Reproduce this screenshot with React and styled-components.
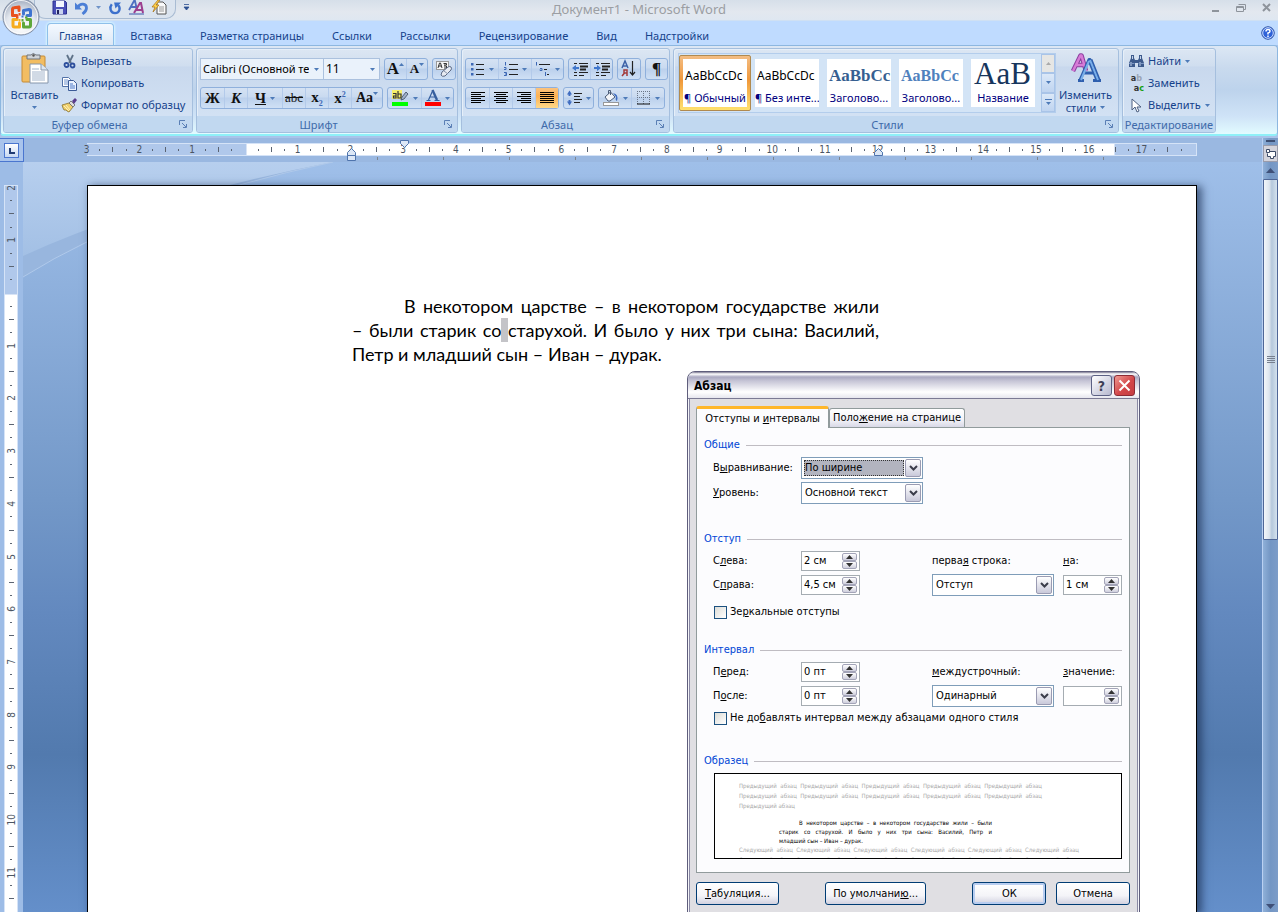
import React from 'react'
import styled, { createGlobalStyle, css } from 'styled-components'

const UI = '"Noto Sans", "Open Sans", sans-serif'
const DIALOG = '"DejaVu Sans Condensed", "DejaVu Sans", sans-serif'
const SERIF = '"Liberation Serif", serif'

const GlobalStyle = createGlobalStyle`
  * { box-sizing: border-box; }
  body { margin: 0; }
  button, input, select { font: inherit; color: inherit; margin: 0; padding: 0; }
  button { background: none; border: 0; cursor: pointer; }
`

const Screen = styled.div`
  position: relative;
  display: flex;
  flex-direction: column;
  height: 100vh;
  overflow: hidden;
  background: #a9c4ea;
  color: #15428b;
  font: 11px/16px ${UI};`

const Svg = styled.svg`
  display: block;
  flex: none;
  overflow: visible;`

/* ---------- title bar and tabs ---------- */

const TitleBar = styled.header`
  display: grid;
  grid-template-columns: 1fr auto 1fr;
  height: 21px;
  background: linear-gradient(#d6dfe9, #e3e8ef 60%, #dfe7f1);
  border-bottom: 1px solid #cfe0f3;`

const QuickArea = styled.div`
  display: flex;
  align-items: flex-start;
  gap: 7px;
  padding-left: 34px;`

const QuickBar = styled.div`
  display: flex;
  align-items: center;
  gap: 8px;
  height: 19px;
  padding: 0 8px 3px 17px;
  border: 1px solid #a9bcd3;
  border-top: 0;
  border-radius: 0 0 10px 12px;
  background: #dbe4ef;`

const WindowTitle = styled.h1`
  margin: 0;
  color: #9b9ea3;
  font: 13px/19px ${UI};`

const WindowButtons = styled.div`
  display: flex;
  justify-content: flex-end;
  align-items: flex-start;
  gap: 16px;
  padding: 3px 7px 0 0;`

const OfficeButton = styled.button`
  position: absolute;
  z-index: 2;
  top: -2px;
  left: 2px;`

const TabBar = styled.nav`
  display: flex;
  align-items: flex-end;
  gap: 4px;
  height: 24px;
  padding: 0 3px 0 47px;
  background: #bfdbff;`

const Tab = styled.button`
  height: 22px;
  padding: 2px 11px 0;
  white-space: nowrap;
  border: 1px solid transparent;
  border-bottom: 0;
  ${p => p.$active && css`
    border-color: #8fc0ea;
    border-radius: 4px 4px 0 0;
    background: linear-gradient(#f4f9ff, #dde8f5);
    box-shadow: 0 0 2px 1px #d8f6ff;
  `}`

const HelpButton = styled.button`
  margin: 0 0 5px auto;`

/* ---------- ribbon ---------- */

const Ribbon = styled.section`
  display: flex;
  gap: 3px;
  height: 91px;
  padding: 2px 2px 1px;
  border: 1px solid #8db7e0;
  border-bottom: 2px solid #8ff0f8;
  border-radius: 4px;
  background: linear-gradient(#dce7f4, #c9daee 25%, #bdd3ec 50%, #cfe3f7 80%, #e2fbff);`

const GroupBox = styled.section`
  display: flex;
  flex-direction: column;
  width: ${p => p.$width}px;
  border: 1px solid #a5bfde;
  border-radius: 3px;
  background: linear-gradient(#dce6f3, #d0deef 20%, #c8d8ed 22%, #d3e2f4 85%);
  box-shadow: inset 1px 1px 0 #e6eff9;
  overflow: hidden;`

const GroupBody = styled.div`
  display: flex;
  flex: 1;
  padding: ${p => p.$pad || '0 3px'};`

const GroupTitle = styled.footer`
  position: relative;
  height: 16px;
  padding-right: ${p => p.$launcher ? 17 : 0}px;
  background: #c1d8f0;
  color: #3e6aaa;
  text-align: center;
  line-height: 17px;`

const Launcher = styled.button`
  position: absolute;
  right: 5px;
  top: 4px;`

const BigButton = styled.button`
  display: flex;
  flex-direction: column;
  align-items: center;
  width: ${p => p.$width}px;
  padding-top: 4px;
  line-height: 13px;
  white-space: nowrap;`

const BigLabel = styled.span`
  display: flex;
  align-items: center;
  gap: 4px;
  padding-top: ${p => p.$top || 0}px;`

const SmallList = styled.div`
  display: flex;
  flex-direction: column;
  padding-top: 1px;`

const SmallButton = styled.button`
  display: flex;
  align-items: center;
  gap: 4px;
  height: 22px;
  white-space: nowrap;`

const ToolRows = styled.div`
  display: flex;
  flex-direction: column;
  gap: 7px;
  padding-top: 9px;`

const ToolRow = styled.div`
  display: flex;
  gap: 4px;
  height: 22px;`

const Cluster = styled.div`
  display: flex;
  border: 1px solid #8fb0dc;
  border-radius: 3px;
  background: linear-gradient(#d5e2f3, #c9daf0 45%, #bbd0ec 50%, #cfe0f5);`

const Tool = styled.button`
  display: flex;
  align-items: center;
  justify-content: center;
  gap: ${p => p.$tight ? 0 : 4}px;
  width: ${p => p.$width || 23}px;
  color: #111;
  border-left: 1px solid #b3caea;
  &:first-child { border-left: 0; }
  svg:nth-child(2) { align-self: ${p => p.$tight ? 'flex-start' : 'center'}; margin-top: ${p => p.$tight ? 4 : 0}px; }
  ${p => p.$on && css`
    background: linear-gradient(#fbc37f, #fdb152 40%, #ffd98a);
  `}`

const Letter = styled.span`
  font: ${p => p.$light ? 'normal' : 'bold'} ${p => p.$size || 15}px/18px ${SERIF};
  font-style: ${p => p.$italic ? 'italic' : 'normal'};
  text-decoration: ${p => p.$line || 'none'};
  sub, sup { color: #3d68b5; font-size: 8px; line-height: 8px; }`

const Combo = styled.div`
  display: flex;
  align-items: center;
  width: ${p => p.$width}px;
  height: 22px;
  padding-right: 4px;
  border: 1px solid #abc1de;
  background: #eaf2fb;
  color: #000;
  & + & { margin-left: -5px; }`

const ComboSelect = styled.select`
  flex: 1;
  min-width: 0;
  margin-right: 5px;
  padding-left: 2px;
  appearance: none;
  border: 0;
  background: none;
  outline: 0;
  font-size: ${p => p.$small ? 11 : 12}px;
  text-overflow: clip;`

const Gallery = styled.div`
  display: flex;
  height: 60px;
  margin-top: 4px;
  border: 1px solid #b3cdec;
  background: #d3e4f6;`

const StyleCard = styled.button`
  width: 72px;
  height: 56px;
  margin-top: 1px;
  padding: 3px;
  border: 1px solid transparent;
  border-radius: 2px;
  ${p => p.$active && css`
    border-color: #b08a50;
    background: linear-gradient(#f3bd84, #f0983b 45%, #ffe16e);
  `}`

const StyleTile = styled.span`
  display: flex;
  flex-direction: column;
  height: 48px;
  background: #fff;
  overflow: hidden;
  white-space: nowrap;`

const StyleSample = styled.span`
  height: 32px;
  padding-left: ${p => p.$size > 20 ? 3 : 2}px;
  line-height: ${p => p.$size > 20 ? 30 : 34}px;
  text-align: left;
  color: ${p => p.$color};
  font-family: ${p => p.$serif ? SERIF : UI};
  font-size: ${p => p.$size}px;
  font-weight: ${p => p.$bold ? 'bold' : 'normal'};`

const StyleName = styled.span`
  color: #000080;
  line-height: 14px;
  text-align: center;`

const GalleryScroll = styled.div`
  display: flex;
  flex-direction: column;
  width: 14px;
  margin-left: 2px;`

const GalleryArrow = styled.button`
  display: flex;
  flex: 1;
  flex-direction: column;
  gap: 2px;
  align-items: center;
  justify-content: center;
  border: 1px solid #a9c4e8;
  background: ${p => p.$off ? '#e6e6e4' : 'linear-gradient(#dbe8f8, #bfd4f0)'};`

const Dash = styled.i`
  width: 7px;
  height: 1px;
  background: #4d7ab8;`

/* ---------- workspace ---------- */

const Workspace = styled.main`
  display: flex;
  flex: 1;
  min-height: 0;
  margin-top: 2px;`

const DocColumn = styled.div`
  display: flex;
  flex-direction: column;
  flex: 1;
  min-width: 0;`

const RulerBand = styled.div`
  display: flex;
  height: 24px;
  background: #9ab8e1;`

const TabStop = styled.button`
  display: flex;
  align-items: center;
  justify-content: center;
  width: 24px;
  border: 1px solid #4a76cf;
  border-left: 0;
  background: #a9c4ec;`

const TabStopFace = styled.span`
  display: block;
  width: 15px;
  height: 15px;
  padding: 4px;
  border: 1px solid #4a76cf;
  background: linear-gradient(#fff, #c6d8f2);`

const Ruler = styled.div`
  position: relative;
  flex: 1;
  margin: 5px 65px 0 63px;`

const RulerScale = styled.div`
  height: 13px;
  border: 1px solid #d5e3f7;
  border-width: 1px 1px 1px 0;
  background: linear-gradient(to right, #b0c8eb 159px, #fff 160px, #fff calc(100% - 82px), #b0c8eb calc(100% - 81px));`

const RulerMarks = styled.div`
  display: flex;
  height: 100%;
  margin: 0 8px 0 -7px;`

const RulerMark = styled.span`
  display: flex;
  flex: 1 1 0;
  align-items: center;
  justify-content: center;
  min-width: 0;
  min-height: 0;
  color: #4b5563;
  font: 10px/11px ${DIALOG};`

const Tick = styled.i`
  width: ${p => p.$vertical ? p.$size : 1}px;
  height: ${p => p.$vertical ? 1 : p.$size}px;
  background: #5b6472;`

const TabTicks = styled.div`
  height: 3px;
  margin: 1px 80px 0 290px;
  background: repeating-linear-gradient(to right, #7d8590 0 1px, transparent 1px 66px);`

const Marker = styled.span`
  position: absolute;
  left: ${p => p.$left}px;
  top: ${p => p.$top}px;`

const DocRow = styled.div`
  display: flex;
  flex: 1;
  min-height: 0;`

const SideRuler = styled.div`
  flex: none;
  width: 23px;
  padding: 23px 5px 0 4px;
  background: #9dbce6;`

const SideScale = styled.div`
  height: 100%;
  border: 1px solid #d5e3f7;
  border-bottom: 0;
  background: linear-gradient(#b0c8eb 108px, #fff 109px);`

const SideMarks = styled.div`
  display: flex;
  flex-direction: column;
  height: calc(100% + 12px);
  margin-top: -5px;`

const SideNumber = styled.span`
  writing-mode: vertical-rl;
  transform: rotate(180deg);`

const Desk = styled.div`
  position: relative;
  display: flex;
  flex: 1;
  min-width: 0;
  padding: 23px 65px 0 64px;
  background: linear-gradient(#9fbfe9, #7398c8 45%, #6389bf 60%, #527aae 79%, #648fca);`

const Swoosh = styled.svg`
  position: absolute;
  left: 0;
  top: 0;`

const Sheet = styled.article`
  position: relative;
  flex: 1;
  padding: 108px 317px 0 264px;
  border: 1px solid #000;
  border-bottom: 0;
  background: #fff;
  box-shadow: 4px 2px 8px 1px rgba(25, 45, 80, 0.65);
  color: #000;
  font: 18px/24px Lato, "Noto Sans", sans-serif;`

const Paragraph = styled.p`
  margin: 0;`

const Line = styled.span`
  display: block;
  padding-left: ${p => p.$indent || 0}px;
  white-space: nowrap;
  text-align-last: ${p => p.$last ? 'left' : 'justify'};`

const Marked = styled.span`
  padding: 1px 0;
  background: #c4c4c8;`

const Scrollbar = styled.aside`
  display: flex;
  flex-direction: column;
  align-items: center;
  width: 16px;
  padding-top: 2px;
  border-left: 1px solid #b9d0f2;
  background: linear-gradient(to right, #8fb0d8, #7396c4 50%, #7c9cc8);`

const SplitHandle = styled.div`
  width: 9px;
  height: 2px;
  background: #3d4f73;`

const RulerToggle = styled.button`
  display: flex;
  align-items: center;
  justify-content: center;
  width: 15px;
  height: 17px;
  margin-top: 3px;
  border: 1px solid #9a9cab;
  background: #d4d4dc;`

const ScrollArrow = styled.button`
  display: flex;
  align-items: center;
  justify-content: center;
  width: 100%;
  height: ${p => p.$height}px;`

const ScrollTrack = styled.div`
  flex: 1;
  width: 100%;`

const Thumb = styled.div`
  display: flex;
  flex-direction: column;
  align-items: center;
  justify-content: center;
  gap: 1px;
  height: 50%;
  border: 1px solid #4f6797;
  border-radius: 1px;
  background: linear-gradient(to right, #f2f6fa, #dde5ee 40%, #b5c8dc 60%, #d4e2ee);`

const Grip = styled.i`
  width: 8px;
  height: 1px;
  background: #77808f;`

/* ---------- dialog ---------- */

const Dialog = styled.div`
  position: absolute;
  z-index: 3;
  left: 687px;
  top: 371px;
  width: 453px;
  border: 1px solid #5f5e7c;
  border-radius: 8px 8px 0 0;
  background: #e0dfe3;
  box-shadow: inset 0 0 0 1px #f5f5fa, inset 0 0 0 2px #8a89a4;
  color: #000;
  font: 11px/14px ${DIALOG};`

const DialogTitle = styled.header`
  display: flex;
  align-items: center;
  gap: 2px;
  height: 27px;
  padding: 1px 4px 0 6px;
  border-bottom: 1px solid #7b7a94;
  border-radius: 7px 7px 0 0;
  background: linear-gradient(#77758f, #fff 2px, #a9a8c1 5px, #c6c5d6 9px, #fff 20px, #e6e6ee);`

const DialogHeading = styled.h2`
  flex: 1;
  margin: 0;
  font: bold 12px/16px ${DIALOG};`

const CaptionButton = styled.button`
  display: flex;
  align-items: center;
  justify-content: center;
  width: 21px;
  height: 21px;
  border: 1px solid ${p => p.$close ? '#8c2b35' : '#5c6184'};
  border-radius: 3px;
  color: #3d3f55;
  font-weight: bold;
  font-size: 14px;
  background: ${p => p.$close
    ? 'linear-gradient(135deg, #ef9a92, #d3474a 55%, #c43d42)'
    : 'linear-gradient(135deg, #fff, #b6b8cf)'};`

const DialogBody = styled.div`
  padding: 7px 9px 20px 8px;`

const DialogTabs = styled.div`
  display: flex;
  align-items: flex-end;`

const DialogTab = styled.button`
  height: ${p => p.$active ? 22 : 19}px;
  width: ${p => p.$active ? 133 : 136}px;
  border: 1px solid #919b9c;
  border-bottom: 0;
  border-radius: 3px 3px 0 0;
  white-space: nowrap;
  background: linear-gradient(#fff, #f3f3f8 60%, #d8d8e6);
  ${p => p.$active && css`
    position: relative;
    margin-bottom: -1px;
    border-top: 3px solid #ffb72b;
    background: #fcfcfe;
  `}`

const Panel = styled.div`
  height: 446px;
  padding: 10px 7px 0;
  border: 1px solid #919b9c;
  background: #fcfcfe;`

const Section = styled.fieldset`
  height: ${p => p.$height}px;
  margin: 0;
  padding: 0;
  border: 0;
  min-width: 0;`

const Legend = styled.legend`
  display: flex;
  align-items: center;
  gap: 6px;
  width: 100%;
  padding: 0;
  color: #0046d5;
  &::after { content: ''; flex: 1; height: 1px; background: #bfbcc2; }`

const Fields = styled.div`
  display: grid;
  grid-template-columns: 88px 131px 131px 1fr;
  grid-auto-rows: ${p => p.$row || 24}px;
  align-items: center;
  margin-top: 3px;
  padding-left: 9px;
  label { white-space: nowrap; }`

const SelectBox = styled.div`
  display: flex;
  width: 122px;
  height: 22px;
  padding: 1px;
  border: 1px solid #7f9db9;
  background: #fff;`

const Select = styled.select`
  flex: 1;
  min-width: 0;
  margin: 1px;
  padding-left: 1px;
  appearance: none;
  border: 0;
  border-radius: 0;
  background: ${p => p.$focused ? '#b2b4bf' : '#fff'};
  outline: ${p => p.$focused ? '1px dotted #333' : '0'};
  outline-offset: -1px;`

const SelectArrow = styled.span`
  display: flex;
  align-items: center;
  justify-content: center;
  width: 16px;
  border: 1px solid #9a9bb2;
  border-radius: 2px;
  background: linear-gradient(#fff, #c9c9da);
  pointer-events: none;`

const SpinBox = styled.div`
  display: flex;
  width: 59px;
  height: 20px;
  padding: 1px;
  border: 1px solid #a5acb2;
  background: #fff;`

const SpinInput = styled.input`
  flex: 1;
  min-width: 0;
  padding-left: 1px;
  border: 0;
  outline: 0;
  background: none;`

const SpinButtons = styled.div`
  display: flex;
  flex-direction: column;
  width: 15px;
  margin-right: 1px;`

const SpinButton = styled.button`
  display: flex;
  flex: 1;
  align-items: center;
  justify-content: center;
  border: 1px solid #a3a4b8;
  border-radius: 2px;
  background: linear-gradient(#fff, #cfcfdd);`

const CheckRow = styled.div`
  display: flex;
  align-items: center;
  gap: 3px;
  height: 16px;
  margin-top: ${p => p.$top}px;
  padding-left: 10px;`

const CheckBox = styled.input`
  appearance: none;
  width: 13px;
  height: 13px;
  border: 1px solid #1c5180;
  background: linear-gradient(135deg, #dcdcd7, #fff);`

const Preview = styled.div`
  height: 86px;
  margin: 5px 0 0 10px;
  padding: 7px 24px 0;
  border: 1px solid #000;
  background: #fff;
  overflow: hidden;
  color: #a8a8a8;
  font: 6px/10px ${DIALOG};
  white-space: nowrap;`

const PreviewText = styled.p`
  width: ${p => p.$width}px;
  margin: 0;`

const PreviewSample = styled.p`
  width: 213px;
  margin: 7px 0 0 40px;
  color: #000;
  line-height: 9px;`

const DialogFooter = styled.footer`
  display: flex;
  gap: 10px;
  margin-top: 9px;`

const PushButton = styled.button`
  width: ${p => p.$width}px;
  height: 23px;
  margin-left: ${p => p.$before || 0}px;
  border: 1px solid #003c74;
  border-radius: 3px;
  background: linear-gradient(#fff, #f4f4f8 60%, #d2d2e0);
  ${p => p.$primary && css`box-shadow: inset 0 0 0 2px #b8cdf0;`}`

/* ---------- icons ---------- */

const Arrow = ({ color = '#4d7ab8', up, size = 5 }) => (
  <Svg width={size} height={(size + 1) / 2} viewBox="0 0 5 3" preserveAspectRatio="none">
    <path d={up ? 'M0 3h5L2.5 0z' : 'M0 0h5L2.5 3z'} fill={color} />
  </Svg>
)

const OfficeLogo = () => (
  <Svg width="38" height="38" viewBox="0 0 38 38">
    <defs>
      <radialGradient id="orb" cx="50%" cy="75%" r="70%">
        <stop offset="0" stopColor="#fff" />
        <stop offset="0.6" stopColor="#e3e7ee" />
        <stop offset="1" stopColor="#a9b3c4" />
      </radialGradient>
    </defs>
    <circle cx="19" cy="19" r="18" fill="url(#orb)" stroke="#7f8ca3" />
    <circle cx="19" cy="19" r="16.500" fill="none" stroke="#fff" strokeOpacity="0.8" />
    <g fill="none" strokeWidth="3" strokeLinejoin="round" strokeLinecap="round">
      <path d="M15 17.500H10.500V11.500Q10.500 10 12 9.800L17 9V12.500" stroke="#e8501e" />
      <path d="M21.500 16V12.500L27 11.500Q28.500 11.500 28.500 13V17.500H25" stroke="#3f74d0" />
      <path d="M15 21.500H11V27.500Q11 29 12.500 29H17.500V25" stroke="#f6ac1d" />
      <path d="M21.500 25V29H27Q28.500 29 28.500 27.500V21.500H25" stroke="#5fa83a" />
    </g>
    <path d="M17.500 15v2.500M14 19.500h2.500" stroke="#e8501e" strokeWidth="2" />
    <path d="M20.500 17.500v2" stroke="#3f74d0" strokeWidth="2" />
    <path d="M17.500 21v2.500" stroke="#f6ac1d" strokeWidth="2" />
    <path d="M20.500 21v2.500M23 19.500h2.500" stroke="#5fa83a" strokeWidth="2" />
  </Svg>
)

const SaveIcon = () => (
  <Svg width="15" height="15" viewBox="0 0 15 15">
    <path d="M1 1h12l1.500 1.500V14H1z" fill="#4a4fb8" stroke="#2c3190" />
    <rect x="4" y="1" width="8" height="6" fill="#f3f6ff" />
    <rect x="4" y="9" width="7" height="5" fill="#c9d3ee" />
    <rect x="5" y="10" width="2" height="4" fill="#20245e" />
  </Svg>
)

const UndoIcon = () => (
  <Svg width="13" height="14" viewBox="0 0 13 14">
    <path d="M3 6C5 2 11.500 2 11.500 7 11.500 10 9.500 11.500 7.500 13" fill="none" stroke="#4c7fd6" strokeWidth="2.800" />
    <path d="M0 1.500V8.500H7z" fill="#4c7fd6" />
  </Svg>
)

const RedoIcon = () => (
  <Svg width="12" height="14" viewBox="0 0 13 14">
    <path d="M3 3C.5 6 1 12.500 6.500 12.500S12.500 6.500 10 4" fill="none" stroke="#3c70cc" strokeWidth="2.600" />
    <path d="M5.500 1H13L7 7.500z" fill="#3c70cc" />
  </Svg>
)

const FontsIcon = () => (
  <Svg width="30" height="30" viewBox="0 0 30 30">
    <g fill="none" strokeLinejoin="round">
      <path d="M2 18 9.500 2.500h1L15 18M5 12h8" stroke="#8d3fa0" strokeWidth="4.500" />
      <path d="M2 18 9.500 2.500h1L15 18M5 12h8" stroke="#d67bd6" strokeWidth="2.500" />
      <path d="M9 27 18 6.500h1L27 27M13 20h11M7 27.500h6M22 27.500h8" stroke="#2f5fae" strokeWidth="3" />
      <path d="M19 7l8 20" stroke="#2f5fae" strokeWidth="5" />
      <path d="M19 7l8 20M10 27 18 8" stroke="#79aee9" strokeWidth="2" />
    </g>
  </Svg>
)

const StylesMini = () => (
  <Svg width="15" height="15" viewBox="0 0 15 15">
    <path d="M0 10 5 1h1l2 9M2 7h5" fill="none" stroke="#4d6fc0" strokeWidth="1.800" />
    <path d="M5 13 11 3h1l2 10M7 10h6" fill="none" stroke="#9d3f8f" strokeWidth="2" />
    <path d="M0 14h15" stroke="#3c55a8" />
  </Svg>
)

const FlashDocIcon = () => (
  <Svg width="15" height="15" viewBox="0 0 15 15">
    <path d="M5 2h6l3 3v9H5z" fill="#fafafa" stroke="#555" />
    <path d="M7 7h5M7 9h5M7 11h5" stroke="#999" />
    <path d="M6 0 0 7h3l-2 5 6-7H4l4-5z" fill="#ffd24d" stroke="#a66d10" strokeWidth="0.700" />
  </Svg>
)

const PasteIcon = () => (
  <Svg width="28" height="31" viewBox="0 0 28 31">
    <rect x="1" y="3" width="23" height="26" rx="1" fill="#f2bd62" stroke="#c58a35" />
    <path d="M6 2h4q2-3 5 0h4v4H6z" fill="#cfd3d8" stroke="#6f757d" />
    <circle cx="12.500" cy="2.500" r="1.200" fill="#555" />
    <path d="M9 11h11l7 6v13H9z" fill="#fff" stroke="#8696ab" />
    <path d="M20 11v6h7" fill="#dbe6f2" stroke="#8696ab" />
    <path d="M11 16h7M11 19h13M11 21h13M11 23h13M11 25h13M11 27h13" stroke="#a4b5cc" />
  </Svg>
)

const CutIcon = () => (
  <Svg width="15" height="15" viewBox="0 0 15 15">
    <path d="M5 1 9 9M11 1 7 9" stroke="#5f7288" strokeWidth="1.800" />
    <circle cx="4.500" cy="11" r="2" fill="none" stroke="#2d4e9c" strokeWidth="1.800" />
    <circle cx="10.500" cy="11.500" r="2" fill="none" stroke="#2d4e9c" strokeWidth="1.800" />
  </Svg>
)

const CopyIcon = () => (
  <Svg width="15" height="15" viewBox="0 0 15 15">
    <path d="M.5 1.500h6l2 2v7h-8z" fill="#fff" stroke="#5272a8" />
    <path d="M2 4h4M2 6h5M2 8h4" stroke="#6f93cf" />
    <path d="M6.500 4.500h5l3 3v7h-8z" fill="#eaf2ff" stroke="#3b5b97" />
    <path d="M8 8h3M8 10h5M8 12h5" stroke="#4d7bc9" />
  </Svg>
)

const BrushIcon = () => (
  <Svg width="15" height="15" viewBox="0 0 15 15">
    <path d="M0 7l7-2 4 4-4 5-2-1-1-1-2 0-1-2z" fill="#f0cf6a" stroke="#8a7430" strokeWidth="0.800" />
    <path d="M2 8l5 5M4 7l4 5" stroke="#fdf0b8" />
    <path d="M7 5l2-2 4 4-2 2z" fill="#ddd" stroke="#666" strokeWidth="0.800" />
    <path d="M10 3l3-3 2 2-3 4z" fill="#5a3c8c" />
  </Svg>
)

const BinocularsIcon = () => (
  <Svg width="15" height="14" viewBox="0 0 15 14">
    <path d="M2 1h3v3l1 2h3l1-2V1h3v3l2 5v4H9V9H6v4H0V9l2-5z" fill="#3d5a8c" />
    <path d="M2 8v4M11 8v4M3.500 2v3M11.500 2v3" stroke="#c5d4ea" />
    <path d="M0 9.500h5.500M9.500 9.500H15" stroke="#7d97c2" />
  </Svg>
)

const ReplaceMark = styled.span`
  display: grid;
  width: 15px;
  color: #333;
  font: bold 9px/10px ${DIALOG};
  span:last-child { justify-self: end; }
  b { color: #14a014; }
  i { font-style: normal; color: #9aa4b4; }`

const ReplaceIcon = () => (
  <ReplaceMark>
    <span>a<i>b</i></span>
    <span>a<b>c</b></span>
  </ReplaceMark>
)

const CursorIcon = () => (
  <Svg width="15" height="15" viewBox="0 0 15 15">
    <path d="M3 1v11l3-3 2 5 2-1-2-4h4z" fill="#fff" stroke="#4d5f80" />
  </Svg>
)

const EraserIcon = () => (
  <Svg width="18" height="18" viewBox="0 0 18 18">
    <rect x="1.500" y="1.500" width="12" height="8" fill="#f7f7f7" stroke="#999" />
    <path d="M3 8l1.500-5h1L7 8M3.500 6h3M8.500 3.500h3v1.500H9M9 6h2.500v2H9" fill="none" stroke="#333" />
    <path d="M7 12l6-5q2-1 3 0t0 3l-6 6q-3 1-4-1z" fill="#e8ebf2" stroke="#5c6a85" />
    <path d="M9 11l4 3" stroke="#8794ab" />
  </Svg>
)

const MarkerIcon = () => (
  <Svg width="17" height="17" viewBox="0 0 17 17">
    <rect width="10" height="9" fill="#f6f06a" />
    <path d="M1 3.500h3v4.500H1.500V6H4M6 1v7h3V4H6" fill="none" stroke="#333" strokeWidth="1.200" />
    <path d="M9 10l1-3 4-5 2 2-4 5z" fill="#9fb0c9" stroke="#3a4760" strokeWidth="0.800" />
    <rect y="12" width="16" height="4" fill="#0f0" />
  </Svg>
)

const FontColorIcon = () => (
  <Svg width="16" height="17" viewBox="0 0 16 17">
    <path d="M3.500 10 8 0M5 7h6M1.500 10.500h4M9.500 10.500h5" fill="none" stroke="#365f9e" strokeWidth="1.200" />
    <path d="M7.500 0 12 10" stroke="#365f9e" strokeWidth="2.400" />
    <rect y="12" width="16" height="4" fill="#f00" />
  </Svg>
)

const BulletsIcon = () => (
  <Svg width="14" height="14" viewBox="0 0 14 14">
    <path d="M0 1h2.500v2.500H0zM0 6h2.500v2.500H0zM0 11h2.500v2.500H0z" fill="#3d68b5" />
    <path d="M5 2.500h8M5 7.500h8M5 12.500h8" stroke="#222" />
  </Svg>
)

const NumbersIcon = () => (
  <Svg width="14" height="14" viewBox="0 0 14 14">
    <path d="M1.500 0v3.500M0 5.500h2v2H0M0 10.500h2.500v3H0M1 12h1" fill="none" stroke="#3d68b5" />
    <path d="M5 2.500h9M5 7.500h9M5 12.500h9" stroke="#222" />
  </Svg>
)

const MultiIcon = () => (
  <Svg width="16" height="14" viewBox="0 0 16 14">
    <path d="M1.500 0v3.500M5 6.500h2v2H5v-1M10.500 10v4M10 11.500h1" fill="none" stroke="#3d68b5" />
    <path d="M4 2.500h11M9 7.500h3M12 12.500h2" stroke="#222" />
  </Svg>
)

const IndentIcon = ({ right }) => (
  <Svg width="16" height="14" viewBox="0 0 16 14">
    <path d="M2 1.500h3M7 1.500h9M7 10.500h9M2 10.500h3M2 13.500h3M7 13.500h5" stroke="#222" />
    <path d="M8 4.500h8M8 7.500h6" stroke="#222" strokeWidth="2" />
    <path d={right ? 'M0 5h3V3l4 3-4 3V7H0z' : 'M7 5H4V3L0 6l4 3V7h3z'} fill="#3f76cc" />
  </Svg>
)

const SortIcon = () => (
  <Svg width="16" height="16" viewBox="0 0 16 16">
    <path d="M1 7 4 0l3 7M2 5h4" fill="none" stroke="#3d62a8" strokeWidth="1.500" />
    <path d="M6 15V9H3v3h3M3.500 12 1 15" fill="none" stroke="#a33a3a" strokeWidth="1.500" />
    <path d="M11.500 0v14M9 11l2.500 3 2.500-3" fill="none" stroke="#222" strokeWidth="1.200" />
  </Svg>
)

const AlignIcon = ({ kind }) => (
  <Svg width="14" height="12" viewBox="0 0 14 12">
    {[14, 10, 14, 10, 14, 10].map((w, i) => {
      const width = kind === 'full' ? 14 : w
      const x = kind === 'right' ? 14 - width : kind === 'center' ? (14 - width) / 2 : 0
      return <rect key={i} x={x} y={i * 2} width={width} height="1" fill="#000" />
    })}
  </Svg>
)

const SpacingIcon = () => (
  <Svg width="15" height="16" viewBox="0 0 15 16">
    <path d="M2.500 3v3M2.500 10v3" stroke="#3f6cc0" strokeWidth="2" />
    <path d="M0 4.500l2.500-4L5 4.500zM0 11.500l2.500 4 2.500-4z" fill="#3f6cc0" />
    <path d="M7 3.500h8M7 6.500h6M7 9.500h8M7 12.500h6" stroke="#222" />
  </Svg>
)

const BucketIcon = () => (
  <Svg width="16" height="16" viewBox="0 0 16 16">
    <path d="M2 7l5.500-5L12 7l-5 4H5z" fill="#f4f6fa" stroke="#4b5c78" />
    <path d="M7.500 5V.5H5.500V4" fill="none" stroke="#4b5c78" />
    <path d="M10 3q6 1 4 8-2-1-1-4z" fill="#3f6cc0" />
    <rect x="0.500" y="12.500" width="15" height="3" fill="#fff" stroke="#999" />
  </Svg>
)

const BorderIcon = () => (
  <Svg width="14" height="14" viewBox="0 0 14 14">
    <path d="M.5 0v13M6.500 0v13M12.500 0v13M0 .5h13M0 6.500h13" stroke="#6b7687" strokeDasharray="1 1" />
    <path d="M0 13h13" stroke="#111" />
  </Svg>
)

const LauncherIcon = () => (
  <Svg width="8" height="8" viewBox="0 0 8 8">
    <path d="M.5 5V.5H6" fill="none" stroke="#5a7fb5" />
    <path d="M3 3l4 4M7.500 4v3.500H4" fill="none" stroke="#5a7fb5" />
  </Svg>
)

const HelpIcon = () => (
  <Svg width="14" height="14" viewBox="0 0 14 14">
    <circle cx="7" cy="7" r="6.200" fill="#2f62d8" stroke="#23489d" />
    <circle cx="7" cy="7" r="5.300" fill="none" stroke="#cfe0ff" />
    <path d="M5 5.500q0-2 2-2t2 1.700Q9 6.500 7 7v1.500M7 9.500V11" fill="none" stroke="#fff" strokeWidth="1.500" />
  </Svg>
)

const Chevron = () => (
  <Svg width="9" height="6" viewBox="0 0 9 6">
    <path d="M1 1l3.500 3.500L8 1" fill="none" stroke="#3b3d4a" strokeWidth="2" />
  </Svg>
)

/* ---------- pieces ---------- */

const tabs = ['Главная', 'Вставка', 'Разметка страницы', 'Ссылки', 'Рассылки', 'Рецензирование', 'Вид', 'Надстройки']

const cards = [
  { sample: 'AaBbCcDc', name: '¶ Обычный', size: 12, color: '#000', active: true },
  { sample: 'AaBbCcDc', name: '¶ Без инте...', size: 12, color: '#000' },
  { sample: 'AaBbCc', name: 'Заголово...', size: 17, color: '#365f91', serif: true, bold: true },
  { sample: 'AaBbCc', name: 'Заголово...', size: 16, color: '#4f81bd', serif: true, bold: true },
  { sample: 'AaB', name: 'Название', size: 31, color: '#17365d', serif: true },
]

function Group({ title, width, pad, launcher = true, children }) {
  return (
    <GroupBox $width={width}>
      <GroupBody $pad={pad}>{children}</GroupBody>
      <GroupTitle $launcher={launcher}>
        {title}
        {launcher && <Launcher aria-label={title}><LauncherIcon /></Launcher>}
      </GroupTitle>
    </GroupBox>
  )
}

function marks(from, count) {
  return Array.from({ length: count }, (_, i) => {
    const quarter = from * 4 + i
    return { key: i, number: quarter % 4 === 0 ? Math.abs(quarter / 4) : null, half: Math.abs(quarter % 4) === 2, zero: quarter === 0 }
  })
}

function Scale({ from, count, vertical }) {
  return marks(from, count).map(m => (
    <RulerMark key={m.key}>
      {m.number !== null
        ? !m.zero && (vertical ? <SideNumber>{m.number}</SideNumber> : m.number)
        : <Tick $vertical={vertical} $size={m.half ? 5 : 2} />}
    </RulerMark>
  ))
}

/* label text with its access key underlined */
function Key({ text }) {
  const [before, letter, after] = text.split('_')
  return <>{before}<u>{letter}</u>{after}</>
}

function SelectField({ id, value, focused }) {
  return (
    <SelectBox>
      <Select id={id} defaultValue={value} $focused={focused}>
        <option>{value}</option>
      </Select>
      <SelectArrow><Chevron /></SelectArrow>
    </SelectBox>
  )
}

function SpinField({ id, value }) {
  return (
    <SpinBox>
      <SpinInput id={id} type="text" defaultValue={value} />
      <SpinButtons>
        <SpinButton aria-label="Больше"><Arrow up size={7} color="#333" /></SpinButton>
        <SpinButton aria-label="Меньше"><Arrow size={7} color="#333" /></SpinButton>
      </SpinButtons>
    </SpinBox>
  )
}

function RibbonPanel() {
  return (
    <Ribbon>
      <Group title="Буфер обмена" width={190}>
        <BigButton $width={55}>
          <PasteIcon />
          <BigLabel $top={4}>Вставить</BigLabel>
          <BigLabel $top={5}><Arrow /></BigLabel>
        </BigButton>
        <SmallList>
          <SmallButton><CutIcon />Вырезать</SmallButton>
          <SmallButton><CopyIcon />Копировать</SmallButton>
          <SmallButton><BrushIcon />Формат по образцу</SmallButton>
        </SmallList>
      </Group>

      <Group title="Шрифт" width={262}>
        <ToolRows>
          <ToolRow>
            <Combo $width={124}>
              <ComboSelect aria-label="Шрифт" $small><option>Calibri (Основной текст)</option></ComboSelect>
              <Arrow />
            </Combo>
            <Combo $width={57}>
              <ComboSelect aria-label="Размер шрифта"><option>11</option></ComboSelect>
              <Arrow />
            </Combo>
            <Cluster>
              <Tool $width={21} $tight><Letter $size={17}>A</Letter><Arrow up /></Tool>
              <Tool $width={21} $tight><Letter $size={13}>A</Letter><Arrow /></Tool>
            </Cluster>
            <Cluster><Tool $width={22} aria-label="Очистить формат"><EraserIcon /></Tool></Cluster>
          </ToolRow>
          <ToolRow>
            <Cluster>
              <Tool><Letter>Ж</Letter></Tool>
              <Tool><Letter $italic>К</Letter></Tool>
              <Tool $width={35}><Letter $line="underline">Ч</Letter><Arrow /></Tool>
              <Tool><Letter $light $size={13} $line="line-through">abc</Letter></Tool>
              <Tool><Letter>x<sub>2</sub></Letter></Tool>
              <Tool><Letter>x<sup>2</sup></Letter></Tool>
              <Tool $width={31} $tight><Letter $size={14}>Aa</Letter><Arrow /></Tool>
            </Cluster>
            <Cluster>
              <Tool $width={33} aria-label="Выделение"><MarkerIcon /><Arrow /></Tool>
              <Tool $width={32} aria-label="Цвет текста"><FontColorIcon /><Arrow /></Tool>
            </Cluster>
          </ToolRow>
        </ToolRows>
      </Group>

      <Group title="Абзац" width={209}>
        <ToolRows>
          <ToolRow>
            <Cluster>
              <Tool $width={32} aria-label="Маркеры"><BulletsIcon /><Arrow /></Tool>
              <Tool $width={33} aria-label="Нумерация"><NumbersIcon /><Arrow /></Tool>
              <Tool $width={32} aria-label="Многоуровневый список"><MultiIcon /><Arrow /></Tool>
            </Cluster>
            <Cluster>
              <Tool $width={21} aria-label="Уменьшить отступ"><IndentIcon /></Tool>
              <Tool $width={22} aria-label="Увеличить отступ"><IndentIcon right /></Tool>
            </Cluster>
            <Cluster><Tool $width={22} aria-label="Сортировка"><SortIcon /></Tool></Cluster>
            <Cluster><Tool $width={21}><Letter $size={17}>¶</Letter></Tool></Cluster>
          </ToolRow>
          <ToolRow>
            <Cluster>
              <Tool aria-label="По левому краю"><AlignIcon kind="left" /></Tool>
              <Tool aria-label="По центру"><AlignIcon kind="center" /></Tool>
              <Tool aria-label="По правому краю"><AlignIcon kind="right" /></Tool>
              <Tool $on aria-label="По ширине"><AlignIcon kind="full" /></Tool>
            </Cluster>
            <Cluster><Tool $width={29} aria-label="Интервал"><SpacingIcon /><Arrow /></Tool></Cluster>
            <Cluster>
              <Tool $width={32} aria-label="Заливка"><BucketIcon /><Arrow /></Tool>
              <Tool $width={33} aria-label="Границы"><BorderIcon /><Arrow /></Tool>
            </Cluster>
          </ToolRow>
        </ToolRows>
      </Group>

      <Group title="Стили" width={446} pad="0 3px 0 4px">
        <Gallery>
          {cards.map((c, i) => (
            <StyleCard key={i} $active={c.active}>
              <StyleTile>
                <StyleSample $size={c.size} $color={c.color} $serif={c.serif} $bold={c.bold}>{c.sample}</StyleSample>
                <StyleName>{c.name}</StyleName>
              </StyleTile>
            </StyleCard>
          ))}
          <GalleryScroll>
            <GalleryArrow $off aria-label="Вверх"><Arrow up color="#aaa" /></GalleryArrow>
            <GalleryArrow aria-label="Вниз"><Arrow /></GalleryArrow>
            <GalleryArrow aria-label="Дополнительно"><Dash /><Arrow /></GalleryArrow>
          </GalleryScroll>
        </Gallery>
        <BigButton $width={60}>
          <FontsIcon />
          <BigLabel $top={5}>Изменить</BigLabel>
          <BigLabel>стили<Arrow /></BigLabel>
        </BigButton>
      </Group>

      <Group title="Редактирование" width={94} launcher={false} pad="0 6px">
        <SmallList>
          <SmallButton><BinocularsIcon />Найти <Arrow /></SmallButton>
          <SmallButton><ReplaceIcon />Заменить</SmallButton>
          <SmallButton><CursorIcon />Выделить<Arrow /></SmallButton>
        </SmallList>
      </Group>
    </Ribbon>
  )
}

function ParagraphDialog() {
  return (
    <Dialog role="dialog" aria-labelledby="dialog-title">
      <DialogTitle>
        <DialogHeading id="dialog-title">Абзац</DialogHeading>
        <CaptionButton>?</CaptionButton>
        <CaptionButton $close aria-label="Закрыть">
          <Svg width="13" height="13" viewBox="0 0 13 13">
            <path d="M1.500 1.500l10 10M11.500 1.500l-10 10" stroke="#fff" strokeWidth="2" />
          </Svg>
        </CaptionButton>
      </DialogTitle>
      <DialogBody>
        <DialogTabs>
          <DialogTab $active><Key text="Отступы и _и_нтервалы" /></DialogTab>
          <DialogTab><Key text="Поло_ж_ение на странице" /></DialogTab>
        </DialogTabs>
        <Panel>
          <Section $height={94}>
            <Legend>Общие</Legend>
            <Fields $row={25}>
              <label htmlFor="align"><Key text="В_ы_равнивание:" /></label>
              <SelectField id="align" value="По ширине" focused />
              <span /><span />
              <label htmlFor="level"><Key text="_У_ровень:" /></label>
              <SelectField id="level" value="Основной текст" />
            </Fields>
          </Section>
          <Section $height={111}>
            <Legend>Отступ</Legend>
            <Fields>
              <label htmlFor="left"><Key text="С_л_ева:" /></label>
              <SpinField id="left" value="2 см" />
              <label htmlFor="first"><Key text="перва_я_ строка:" /></label>
              <label htmlFor="by"><Key text="_н_а:" /></label>
              <label htmlFor="right"><Key text="С_п_рава:" /></label>
              <SpinField id="right" value="4,5 см" />
              <SelectField id="first" value="Отступ" />
              <SpinField id="by" value="1 см" />
            </Fields>
            <CheckRow $top={7}>
              <CheckBox id="mirror" type="checkbox" />
              <label htmlFor="mirror"><Key text="Зе_р_кальные отступы" /></label>
            </CheckRow>
          </Section>
          <Section $height={111}>
            <Legend>Интервал</Legend>
            <Fields>
              <label htmlFor="before"><Key text="П_е_ред:" /></label>
              <SpinField id="before" value="0 пт" />
              <label htmlFor="spacing"><Key text="_м_еждустрочный:" /></label>
              <label htmlFor="amount"><Key text="_з_начение:" /></label>
              <label htmlFor="after"><Key text="П_о_сле:" /></label>
              <SpinField id="after" value="0 пт" />
              <SelectField id="spacing" value="Одинарный" />
              <SpinField id="amount" value="" />
            </Fields>
            <CheckRow $top={2}>
              <CheckBox id="same" type="checkbox" />
              <label htmlFor="same"><Key text="Не до_б_авлять интервал между абзацами одного стиля" /></label>
            </CheckRow>
          </Section>
          <Section $height={110}>
            <Legend>Образец</Legend>
            <Preview>
              <PreviewText $width={303}>
                <Line>{'Предыдущий абзац '.repeat(5).trim()}</Line>
                <Line>{'Предыдущий абзац '.repeat(5).trim()}</Line>
                <Line $last>Предыдущий абзац</Line>
              </PreviewText>
              <PreviewSample>
                <Line $indent={20}>В некотором царстве – в некотором государстве жили – были</Line>
                <Line>старик со старухой. И было у них три сына: Василий, Петр и</Line>
                <Line $last>младший сын – Иван – дурак.</Line>
              </PreviewSample>
              <PreviewText $width={340}>
                <Line>{'Следующий абзац '.repeat(6).trim()}</Line>
                <Line>{'Следующий абзац '.repeat(6).trim()}</Line>
              </PreviewText>
            </Preview>
          </Section>
        </Panel>
        <DialogFooter>
          <PushButton $width={83}><Key text="_Т_абуляция..." /></PushButton>
          <PushButton $width={102} $before={36}><Key text="По умолчани_ю_..." /></PushButton>
          <PushButton $width={74} $before={36} $primary>ОК</PushButton>
          <PushButton $width={74}>Отмена</PushButton>
        </DialogFooter>
      </DialogBody>
    </Dialog>
  )
}

export default function App() {
  return (
    <Screen>
      <GlobalStyle />
      <OfficeButton aria-label="Office"><OfficeLogo /></OfficeButton>
      <TitleBar>
        <QuickArea>
          <QuickBar>
            <SaveIcon />
            <UndoIcon />
            <Arrow color="#6f93c8" />
            <RedoIcon />
            <StylesMini />
            <FlashDocIcon />
          </QuickBar>
          <Svg width="7" height="12" viewBox="0 0 7 12">
            <path d="M1 4.500h5M1 7h5L3.500 10z" fill="#2b4f91" stroke="#2b4f91" strokeWidth="0.800" />
          </Svg>
        </QuickArea>
        <WindowTitle>Документ1 - Microsoft Word</WindowTitle>
        <WindowButtons>
          <Svg width="8" height="10" viewBox="0 0 8 10"><path d="M0 8h7" stroke="#8e949c" strokeWidth="2" /></Svg>
          <Svg width="10" height="10" viewBox="0 0 10 10">
            <path d="M2.500 1.500h7v5h-2M.5 3.500h7v5h-7zM.5 4.500h7" fill="none" stroke="#8e949c" />
          </Svg>
          <Svg width="9" height="9" viewBox="0 0 9 9"><path d="M1 1l7 7M8 1L1 8" stroke="#8e949c" strokeWidth="2" /></Svg>
        </WindowButtons>
      </TitleBar>
      <TabBar>
        {tabs.map((t, i) => <Tab key={t} $active={i === 0}>{t}</Tab>)}
        <HelpButton aria-label="Справка"><HelpIcon /></HelpButton>
      </TabBar>
      <RibbonPanel />

      <Workspace>
        <DocColumn>
          <RulerBand>
            <TabStop aria-label="Табуляция">
              <TabStopFace>
                <Svg width="6" height="6" viewBox="0 0 6 6"><path d="M1 0v5h5" fill="none" stroke="#1f3b73" strokeWidth="2" /></Svg>
              </TabStopFace>
            </TabStop>
            <Ruler>
              <RulerScale><RulerMarks><Scale from={-3} count={84} /></RulerMarks></RulerScale>
              <TabTicks />
              <Marker $left={313} $top={-3}>
                <Svg width="9" height="8" viewBox="0 0 9 8"><path d="M.5.500h8v3l-4 4-4-4z" fill="#dce7f6" stroke="#4f74ad" /></Svg>
              </Marker>
              <Marker $left={260} $top={5}>
                <Svg width="9" height="13" viewBox="0 0 9 13">
                  <path d="M4.500.500l4 4v3h-8v-3zM.5 7.500h8v5h-8z" fill="#dce7f6" stroke="#4f74ad" />
                </Svg>
              </Marker>
              <Marker $left={787} $top={5}>
                <Svg width="9" height="8" viewBox="0 0 9 8"><path d="M4.500.500l4 4v3h-8v-3z" fill="#dce7f6" stroke="#4f74ad" /></Svg>
              </Marker>
            </Ruler>
          </RulerBand>
          <DocRow>
            <SideRuler>
              <SideScale><SideMarks><Scale from={-2} count={56} vertical /></SideMarks></SideScale>
            </SideRuler>
            <Desk>
              <Swoosh width="420" height="130" viewBox="0 0 420 130">
                <defs>
                  <linearGradient id="sweep" x1="0" y1="0" x2="0" y2="1">
                    <stop offset="0" stopColor="#b7cfee" />
                    <stop offset="1" stopColor="#a3c0e5" />
                  </linearGradient>
                </defs>
                <path d="M0 0h310Q120 40 0 115z" fill="#98b6de" />
                <path d="M0 0h310Q130 35 0 94z" fill="url(#sweep)" />
                <path d="M0 115Q120 40 310 0" fill="none" stroke="#b0c9ea" />
              </Swoosh>
              <Sheet>
                <Paragraph>
                  <Line $indent={52}>В некотором царстве – в некотором государстве жили</Line>
                  <Line>– были старик со<Marked> </Marked>старухой. И было у них три сына: Василий,</Line>
                  <Line $last>Петр и младший сын – Иван – дурак.</Line>
                </Paragraph>
              </Sheet>
            </Desk>
          </DocRow>
        </DocColumn>
        <Scrollbar>
          <SplitHandle />
          <RulerToggle aria-label="Линейка">
            <Svg width="12" height="12" viewBox="0 0 12 12">
              <path d="M1.500 1.500h3v3h-3zM4.500 3.500h6v5h-2v2h-3v-2h-3v-3" fill="#fff" stroke="#3c4a66" />
            </Svg>
          </RulerToggle>
          <ScrollArrow $height={17} aria-label="Вверх">
            <Svg width="9" height="5" viewBox="0 0 9 5"><path d="M0 5h9L4.500 0z" fill="#3f5078" /></Svg>
          </ScrollArrow>
          <ScrollTrack>
            <Thumb><Grip /><Grip /><Grip /><Grip /></Thumb>
          </ScrollTrack>
          <ScrollArrow $height={11} aria-label="Вниз">
            <Svg width="9" height="5" viewBox="0 0 9 5"><path d="M0 0h9L4.500 5z" fill="#3f5078" /></Svg>
          </ScrollArrow>
        </Scrollbar>
      </Workspace>

      <ParagraphDialog />
    </Screen>
  )
}
